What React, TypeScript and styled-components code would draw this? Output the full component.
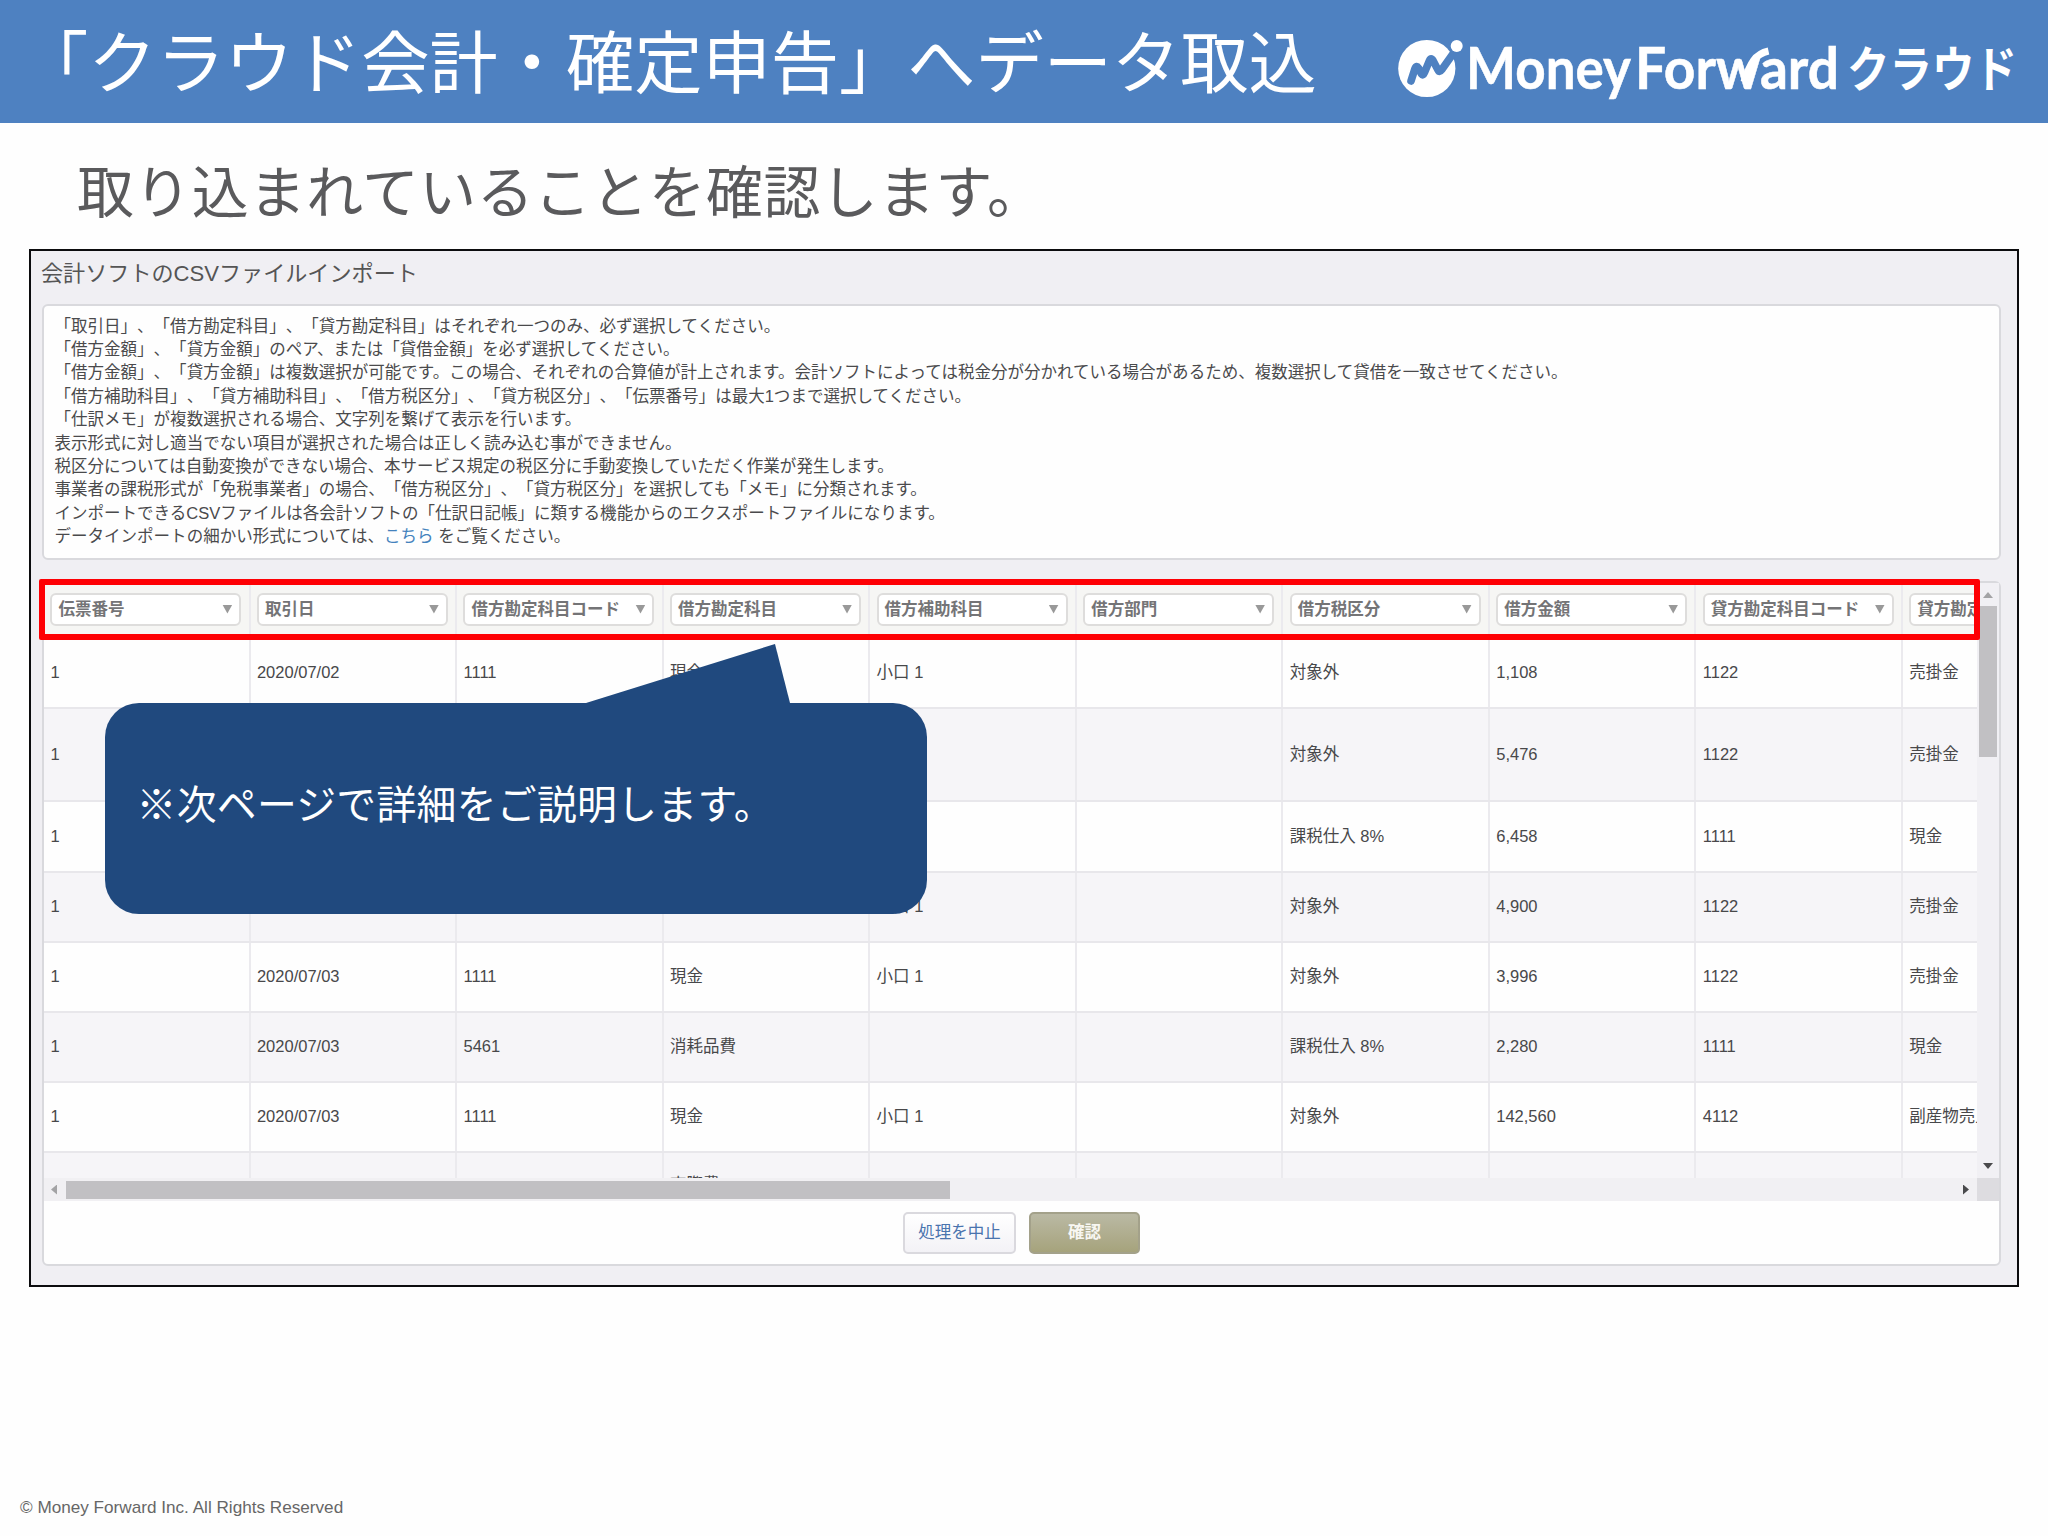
import React from "react";
import styled, { createGlobalStyle } from "styled-components";

const jp = `"Liberation Sans", "Noto Sans CJK JP", sans-serif`;

const GlobalStyle = createGlobalStyle`
  * { box-sizing: border-box; }
  body { margin: 0; background: #fefefe; text-spacing-trim: space-all; }
`;

const Page = styled.div`
  width: 2048px;
  height: 1536px;
  background: #fefefe;
  font-family: ${jp};
  display: flex;
  flex-direction: column;
  overflow: hidden;
`;

const Header = styled.header`
  height: 123px;
  flex: none;
  background: #4e81c1;
  display: flex;
  align-items: center;
  justify-content: space-between;
  padding: 0 0 0 20px;
`;

const Title = styled.h1`
  margin: 0;
  padding-bottom: 6px;
  font: 400 68.27px/100px "Noto Sans CJK JP", sans-serif;
  color: #fff;
  white-space: nowrap;
`;

const Logo = styled.svg`
  display: block;
  width: 658px;
  height: 123px;
  flex: none;
`;

const Lead = styled.p`
  margin: 23px 0 0 77px;
  height: 84px;
  font: 400 56.9px/84px "Noto Sans CJK JP", sans-serif;
  letter-spacing: 0.45px;
  color: #5a5a5c;
  white-space: nowrap;
`;

const Panel = styled.main`
  position: relative;
  margin: 19px 0 0 29px;
  width: 1990px;
  height: 1038px;
  flex: none;
  border: 2px solid #0c0c0e;
  background: #f0eff3;
  padding: 0 16px 0 11px;
  display: flex;
  flex-direction: column;
`;

const PanelTitle = styled.h2`
  margin: 0 0 0 -1px;
  height: 53px;
  font: 400 22.1px/45px ${jp};
  color: #555;
  white-space: nowrap;
`;

const Card = styled.section<{ $height: number }>`
  height: ${(p) => p.$height}px;
  flex: none;
  background: #fefefe;
  border: 2px solid #d9d9dd;
  border-radius: 6px;
`;

const Notes = styled(Card)`
  padding: 8.5px 10.5px;
  margin-bottom: 21px;
`;

const Note = styled.p`
  margin: 0;
  font-size: 16.53px;
  line-height: 23.4px;
  color: #4a4a4c;
  white-space: nowrap;
`;

const Link = styled.a`
  color: #4482bd;
`;

const ScrollArea = styled.div`
  display: grid;
  grid-template-columns: 1933px 23px;
  grid-template-rows: 595px 23px;
  overflow: hidden;
`;

const Viewport = styled.div`
  overflow: hidden;
`;

const Table = styled.div`
  width: 2066px;
`;

const Row = styled.div<{ $height: number; $bg: string }>`
  display: grid;
  grid-template-columns: repeat(10, 206.55px);
  height: ${(p) => p.$height}px;
  background: ${(p) => p.$bg};
  border-bottom: 2px solid #e8e7eb;
`;

const Cell = styled.div`
  display: flex;
  align-items: center;
  padding: 0 7px 2px 6.4px;
  border-right: 2px solid #ebeaee;
  font-size: 16.5px;
  line-height: 20px;
  color: #48484a;
  white-space: nowrap;
`;

const Select = styled.div`
  flex: none;
  width: 191px;
  height: 33px;
  border: 2px solid #dedddc;
  border-radius: 6px;
  background: #fff;
  display: flex;
  align-items: center;
  justify-content: space-between;
  padding: 0 7px 0 6px;
  font-size: 16.5px;
  font-weight: 700;
  color: #747476;
`;

const Arrow = styled.i<{ $dir: "up" | "down" | "left" | "right"; $color: string; $w?: number; $h?: number }>`
  width: ${(p) => p.$w ?? 9}px;
  height: ${(p) => p.$h ?? 6}px;
  flex: none;
  background: ${(p) => p.$color};
  clip-path: polygon(${(p) =>
    ({
      up: "50% 0, 100% 100%, 0 100%",
      down: "0 0, 100% 0, 50% 100%",
      left: "100% 0, 100% 100%, 0 50%",
      right: "0 0, 100% 50%, 0 100%",
    })[p.$dir]});
`;

const VBar = styled.div`
  background: #f1f0f4;
  display: flex;
  flex-direction: column;
  align-items: center;
  padding: 9px 1px 9px 0;
`;

const VThumb = styled.div`
  width: 18px;
  height: 151px;
  margin: 8px 0 auto;
  background: #c1c0c3;
`;

const HBar = styled.div`
  background: #f1f0f3;
  display: flex;
  align-items: center;
  padding: 0 8px 0 7px;
`;

const HThumb = styled.div`
  width: 884px;
  height: 18px;
  margin: 0 auto 0 9px;
  background: #c1c0c3;
`;

const Corner = styled.div`
  background: #dddce0;
`;

const Actions = styled.div`
  display: flex;
  justify-content: center;
  gap: 13px;
  padding: 11px 0 0 0;
`;

const Button = styled.button<{ $primary?: boolean }>`
  width: ${(p) => (p.$primary ? 111 : 113)}px;
  height: 42px;
  padding: 0 0 1px;
  border: 2px solid ${(p) => (p.$primary ? "#a3a18a" : "#dad9de")};
  border-radius: 5px;
  background: ${(p) => (p.$primary ? "linear-gradient(#bab9a4, #a6a37c)" : "linear-gradient(#fff, #f3f2f6)")};
  color: ${(p) => (p.$primary ? "#f8f7f2" : "#4a74ae")};
  font: ${(p) => (p.$primary ? 700 : 400)} 16.5px/1 ${jp};
`;

const Highlight = styled.div`
  position: absolute;
  left: 8px;
  top: 328px;
  width: 1941px;
  height: 61px;
  border: 6px solid #fe0004;
  border-radius: 2px;
`;

const Callout = styled.div`
  position: absolute;
  left: 74px;
  top: 452px;
  width: 822px;
  height: 211px;
  border-radius: 34px;
  background: #20497e;
  color: #fff;
  display: flex;
  align-items: center;
  padding: 0 0 14px 31.5px;
  font: 400 39.85px/60px "Noto Sans CJK JP", sans-serif;
  letter-spacing: 0.3px;
  white-space: nowrap;
  &::before {
    content: "";
    position: absolute;
    left: 479px;
    top: -59px;
    width: 207px;
    height: 61px;
    background: #20497e;
    clip-path: polygon(0 100%, 2px 59px, 191px 0, 206px 59px, 206px 100%);
  }
`;

const Footer = styled.footer`
  margin: auto 0 18px 20px;
  font: 400 17.15px/22px "Liberation Sans", sans-serif;
  color: #666;
`;

const notes: React.ReactNode[] = [
  "「取引日」、「借方勘定科目」、「貸方勘定科目」はそれぞれ一つのみ、必ず選択してください。",
  "「借方金額」、「貸方金額」のペア、または「貸借金額」を必ず選択してください。",
  "「借方金額」、「貸方金額」は複数選択が可能です。この場合、それぞれの合算値が計上されます。会計ソフトによっては税金分が分かれている場合があるため、複数選択して貸借を一致させてください。",
  "「借方補助科目」、「貸方補助科目」、「借方税区分」、「貸方税区分」、「伝票番号」は最大1つまで選択してください。",
  "「仕訳メモ」が複数選択される場合、文字列を繋げて表示を行います。",
  "表示形式に対し適当でない項目が選択された場合は正しく読み込む事ができません。",
  "税区分については自動変換ができない場合、本サービス規定の税区分に手動変換していただく作業が発生します。",
  "事業者の課税形式が「免税事業者」の場合、「借方税区分」、「貸方税区分」を選択しても「メモ」に分類されます。",
  "インポートできるCSVファイルは各会計ソフトの「仕訳日記帳」に類する機能からのエクスポートファイルになります。",
  <>データインポートの細かい形式については、<Link>こちら</Link> をご覧ください。</>,
];

const columns = ["伝票番号", "取引日", "借方勘定科目コード", "借方勘定科目", "借方補助科目", "借方部門", "借方税区分", "借方金額", "貸方勘定科目コード", "貸方勘定科目"];

const rows: { h: number; cells: string[] }[] = [
  { h: 70.2, cells: ["1", "2020/07/02", "1111", "現金", "小口 1", "", "対象外", "1,108", "1122", "売掛金"] },
  { h: 93.3, cells: ["1", "", "", "", "", "", "対象外", "5,476", "1122", "売掛金"] },
  { h: 70.2, cells: ["1", "", "", "", "", "", "課税仕入 8%", "6,458", "1111", "現金"] },
  { h: 70.2, cells: ["1", "", "", "", "小口 1", "", "対象外", "4,900", "1122", "売掛金"] },
  { h: 70.2, cells: ["1", "2020/07/03", "1111", "現金", "小口 1", "", "対象外", "3,996", "1122", "売掛金"] },
  { h: 70.2, cells: ["1", "2020/07/03", "5461", "消耗品費", "", "", "課税仕入 8%", "2,280", "1111", "現金"] },
  { h: 70.2, cells: ["1", "2020/07/03", "1111", "現金", "小口 1", "", "対象外", "142,560", "4112", "副産物売上"] },
  { h: 66, cells: ["", "", "", "交際費", "", "", "", "", "", ""] },
];

const MoneyForwardLogo = () => (
  <Logo viewBox="1390 0 658 123" fill="#fff">
    <circle cx="1426.8" cy="68.5" r="28.6" />
    <path
      d="M1411 81 L1415 68.5 Q1416.5 65 1418.5 68 L1421.5 74 Q1423 76 1424.5 72.5 L1429.5 60.5 Q1431 57 1433 60.5 L1438 70 Q1439.5 73 1441.5 70 L1455 51"
      fill="none" stroke="#4e81c1" strokeWidth="7.6" strokeLinecap="round" strokeLinejoin="round"
    />
    <circle cx="1456.7" cy="46" r="6" />
    <g fontFamily="Lato, sans-serif" fontWeight="700" fontSize="57.5" stroke="#fff" strokeWidth="0.5">
      <text x="1466" y="88.5" textLength="165" lengthAdjust="spacingAndGlyphs">Money</text>
      <text x="1635" y="88.5" textLength="204" lengthAdjust="spacingAndGlyphs">Forward</text>
    </g>
    <path d="M1744 82 C1750 63 1755 54 1768.5 51" fill="none" stroke="#fff" strokeWidth="7" />
    <text x="1847" y="86.5" fontFamily="Noto Sans CJK JP, sans-serif" fontWeight="700" fontSize="49" textLength="170" lengthAdjust="spacingAndGlyphs">クラウド</text>
  </Logo>
);

export default function App() {
  return (
    <Page>
      <GlobalStyle />
      <Header>
        <Title>「クラウド会計・確定申告」へデータ取込</Title>
        <MoneyForwardLogo />
      </Header>
      <Lead>取り込まれていることを確認します。</Lead>
      <Panel>
        <PanelTitle>会計ソフトのCSVファイルインポート</PanelTitle>
        <Notes $height={256}>
          {notes.map((n, i) => <Note key={i}>{n}</Note>)}
        </Notes>
        <Card $height={685}>
          <ScrollArea>
            <Viewport>
              <Table>
                <Row $height={56} $bg="#f6f6f4">
                  {columns.map((c) => (
                    <Cell key={c}>
                      <Select>{c}<Arrow $dir="down" $color="#999" $w={10} $h={9} /></Select>
                    </Cell>
                  ))}
                </Row>
                {rows.map((r, i) => (
                  <Row key={i} $height={r.h} $bg={i % 2 ? "#f6f5f8" : "#fefefe"}>
                    {r.cells.map((c, j) => <Cell key={j}>{c}</Cell>)}
                  </Row>
                ))}
              </Table>
            </Viewport>
            <VBar>
              <Arrow $dir="up" $color="#a3a3a5" $w={10} />
              <VThumb />
              <Arrow $dir="down" $color="#4a4a4c" $w={10} />
            </VBar>
            <HBar>
              <Arrow $dir="left" $color="#a3a3a5" $w={6} $h={10} />
              <HThumb />
              <Arrow $dir="right" $color="#4a4a4c" $w={6} $h={10} />
            </HBar>
            <Corner />
          </ScrollArea>
          <Actions>
            <Button>処理を中止</Button>
            <Button $primary>確認</Button>
          </Actions>
        </Card>
        <Highlight />
        <Callout>※次ページで詳細をご説明します。</Callout>
      </Panel>
      <Footer>© Money Forward Inc. All Rights Reserved</Footer>
    </Page>
  );
}
